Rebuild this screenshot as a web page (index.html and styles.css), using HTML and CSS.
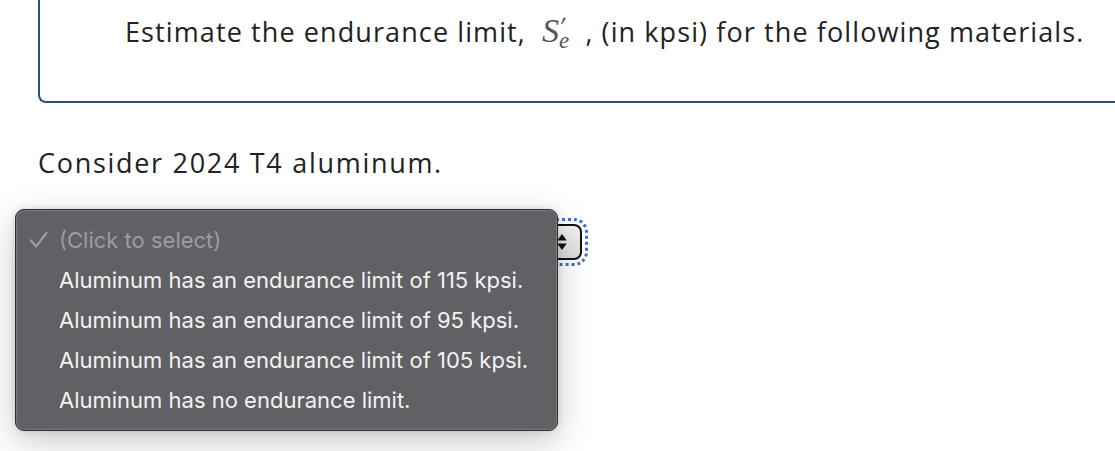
FILE: index.html
```html
<!DOCTYPE html>
<html lang="en">
<head>
<meta charset="utf-8">
<title>Endurance limit</title>
<link rel="stylesheet" href="styles.css">
</head>
<body>
<div class="page">
  <div class="question">
    <p class="prompt">Estimate the endurance limit, <span class="math"><span class="var">S</span><span class="scripts"><span class="prime">′</span><span class="sub">e</span></span></span> , (in kpsi) for the following materials.</p>
  </div>
  <p class="part">Consider 2024 T4 aluminum.</p>
  <div class="select-row">
    <div class="select-wrap">
      <div class="select">
        <svg class="arrows" width="10" height="18" viewBox="0 0 10 18"><path d="M5 1 L9.8 7.5 H0.2 Z M5 17 L9.8 10.5 H0.2 Z" fill="#111"/></svg>
      </div>
    </div>
    <ul class="menu">
      <li class="item placeholder"><svg class="check" width="20" height="18" viewBox="0 0 20 18"><path d="M2 9.5 L7 15.5 L17.5 2" fill="none" stroke="#9d9ca1" stroke-width="2.3" stroke-linecap="round" stroke-linejoin="round"/></svg>(Click to select)</li>
      <li class="item">Aluminum has an endurance limit of 115 kpsi.</li>
      <li class="item">Aluminum has an endurance limit of 95 kpsi.</li>
      <li class="item">Aluminum has an endurance limit of 105 kpsi.</li>
      <li class="item">Aluminum has no endurance limit.</li>
    </ul>
  </div>
</div>
</body>
</html>
```

FILE: styles.css
```css
html, body {
  margin: 0;
  padding: 0;
  background: #ffffff;
}
body {
  width: 1115px;
  height: 451px;
  overflow: hidden;
  font-family: "Open Sans", "Liberation Sans", sans-serif;
  color: #222;
}
.page {
  display: flex;
  flex-direction: column;
}
.question {
  margin-left: 38px;
  height: 101px;
  border-left: 2px solid #2a4d82;
  border-bottom: 2px solid #2a4d82;
  border-bottom-left-radius: 8px;
}
.prompt {
  margin: 0;
  padding: 14px 0 0 85px;
  font-size: 27px;
  letter-spacing: 1.1px;
  line-height: 34px;
  white-space: nowrap;
  color: #222;
}
.math {
  font-family: "Liberation Serif", "DejaVu Serif", serif;
  font-style: italic;
  color: #555;
  letter-spacing: 0;
  margin-left: 8px;
  margin-right: 8px;
}
.var {
  font-size: 34px;
}
.scripts {
  display: inline-block;
  vertical-align: -6px;
  margin-left: 0;
  line-height: 14px;
}
.prime {
  display: block;
  font-size: 28px;
  font-style: normal;
  line-height: 12px;
  transform: skewX(-14deg);
}
.sub {
  display: block;
  font-size: 23px;
  line-height: 16px;
}
.part {
  margin: 43px 0 0 38px;
  font-size: 27px;
  letter-spacing: 1.7px;
  line-height: 34px;
  color: #222;
}
.select-row {
  position: relative;
  margin-top: 44px;
  height: 220px;
}
.select-wrap {
  margin-left: 38px;
  width: 544px;
}
.select {
  height: 32px;
  border: 2px solid #111;
  border-radius: 8px;
  background: linear-gradient(#f4f4f4, #dcdcdc);
  outline: 3px dotted #3a72c4;
  outline-offset: 3px;
  display: flex;
  align-items: center;
  justify-content: flex-end;
  padding-right: 13px;
}
.arrows {
  display: block;
}
.menu {
  position: absolute;
  left: 15px;
  top: -15px;
  width: 541px;
  margin: 0;
  padding: 10px 0 10px;
  list-style: none;
  background: #616065;
  border: 1px solid #2e2e30;
  border-radius: 9px;
  box-shadow: inset 0 0 0 1px #7a797e, 0 10px 34px rgba(0, 0, 0, 0.22), 0 0 6px rgba(0, 0, 0, 0.12);
  font-family: "Inter", "Liberation Sans", sans-serif;
  font-size: 22px;
  color: #f2f2f2;
}
.item {
  position: relative;
  height: 40px;
  line-height: 40px;
  padding-left: 43px;
  white-space: nowrap;
}
.placeholder {
  color: #9d9ca1;
}
.check {
  position: absolute;
  left: 13px;
  top: 11px;
}
```
